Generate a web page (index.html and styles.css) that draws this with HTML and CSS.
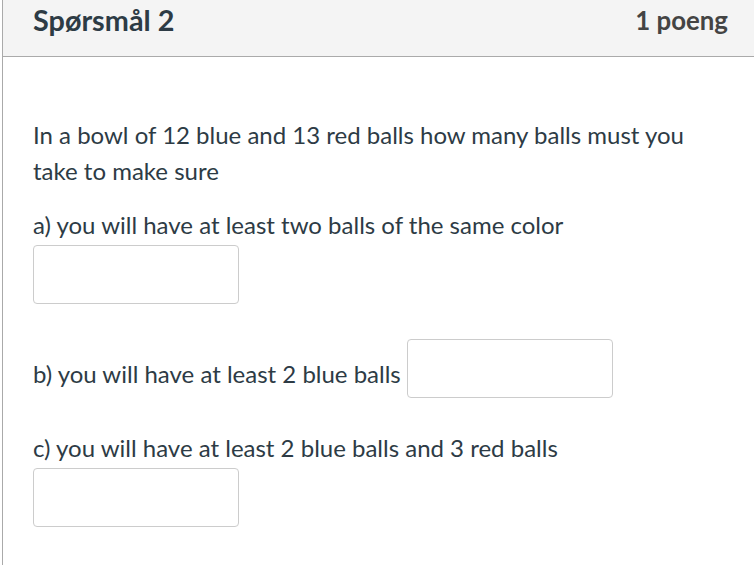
FILE: index.html
```html
<!DOCTYPE html>
<html lang="no">
<head>
<meta charset="utf-8">
<title>Spørsmål 2</title>
<link rel="stylesheet" href="styles.css">
</head>
<body>
<div class="question">
  <div class="q-header">
    <span class="q-title">Spørsmål 2</span>
    <span class="q-points">1 poeng</span>
  </div>
  <div class="q-body">
    <p class="intro">In a bowl of 12 blue and 13 red balls how many balls must you take to make sure</p>
    <p class="part">a) you will have at least two balls of the same color</p>
    <input class="answer" type="text" aria-label="a">
    <p class="part inline-part">b) you will have at least 2 blue balls <input class="answer" type="text" aria-label="b"></p>
    <p class="part part-c">c) you will have at least 2 blue balls and 3 red balls</p>
    <input class="answer" type="text" aria-label="c">
  </div>
</div>
</body>
</html>
```
FILE: styles.css
```css
html, body {
  margin: 0;
  padding: 0;
  background: #fff;
}
body {
  font-family: Lato, "Noto Sans", sans-serif;
  color: #2d3b45;
  overflow: hidden;
}
.question {
  margin-left: 2px;
  border-left: 1px solid #aaaaaa;
  min-height: 565px;
}
.q-header {
  display: flex;
  justify-content: space-between;
  align-items: center;
  height: 57px;
  box-sizing: border-box;
  padding: 0 26px 0 30px;
  background: #f4f4f4;
  border-bottom: 1px solid #aaaaaa;
}
.q-title {
  font-size: 28.8px;
  font-weight: 700;
  color: #2d3b45;
  margin-top: -17px;
}
.q-points {
  font-size: 25.8px;
  font-weight: 700;
  color: #444444;
  margin-top: -17px;
}
.q-body {
  padding: 60px 30px 0 30px;
  font-size: 24px;
  line-height: 36px;
}
.q-body p {
  margin: 0;
}
.intro {
  margin-bottom: 18px !important;
}
.answer {
  display: block;
  box-sizing: border-box;
  width: 206px;
  height: 59px;
  margin: 2px 0 0 0;
  border: 1px solid #cccccc;
  border-radius: 4px;
  background: #fff;
  font: inherit;
  padding: 0 8px;
}
.inline-part {
  margin-top: 35px !important;
}
.inline-part .answer {
  display: inline-block;
  vertical-align: 5px;
  margin: 0;
}
.part-c {
  margin-top: 32px !important;
}
```
